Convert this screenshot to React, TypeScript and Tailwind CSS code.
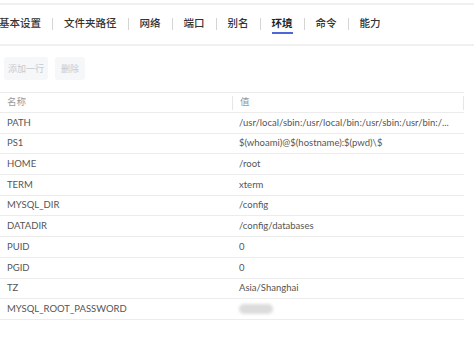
import React from 'react';

const tabs = ['基本设置', '文件夹路径', '网络', '端口', '别名', '环境', '命令', '能力'];

const rows: { name: string; value: string; secret?: boolean }[] = [
  { name: 'PATH', value: '/usr/local/sbin:/usr/local/bin:/usr/sbin:/usr/bin:/...' },
  { name: 'PS1', value: '$(whoami)@$(hostname):$(pwd)\\$' },
  { name: 'HOME', value: '/root' },
  { name: 'TERM', value: 'xterm' },
  { name: 'MYSQL_DIR', value: '/config' },
  { name: 'DATADIR', value: '/config/databases' },
  { name: 'PUID', value: '0' },
  { name: 'PGID', value: '0' },
  { name: 'TZ', value: 'Asia/Shanghai' },
  { name: 'MYSQL_ROOT_PASSWORD', value: '', secret: true },
];

export default function App() {
  const active = '环境';
  return (
    <div
      className="h-[341px] w-[474px] overflow-hidden bg-white pt-[3px]"
      style={{ fontFamily: '"Noto Sans", "Noto Sans CJK SC", sans-serif' }}
    >
      {/* Tabs */}
      <nav className="flex h-[43px] items-start gap-[11px] border-y-2 border-y-[#f0f0f0] pt-[11px]">
        {tabs.map((t, i) => (
          <React.Fragment key={t}>
            {i > 0 && <span className="mt-[2px] h-[12px] w-px bg-[#d4d4d4]" />}
            <div className={`flex flex-col items-center ${i === 0 ? '-ml-[1px]' : ''}`}>
              <span
                className={`text-[10.5px] leading-[14px] ${
                  t === active ? 'font-semibold text-[#222]' : 'font-medium text-[#333]'
                }`}
              >
                {t}
              </span>
              <span
                className={`mt-[2px] h-[2px] w-full ${t === active ? 'bg-[#4f66d8]' : 'bg-transparent'}`}
              />
            </div>
          </React.Fragment>
        ))}
      </nav>

      {/* Toolbar */}
      <div className="mt-[11px] flex gap-[7px] pl-[4px]">
        <button
          type="button"
          className="h-[23px] w-[44px] rounded-[3px] bg-[#f6f7f9] text-[9px] text-[#c6c9ce]"
        >
          添加一行
        </button>
        <button
          type="button"
          className="h-[23px] w-[30px] rounded-[3px] bg-[#f6f7f9] text-[9px] text-[#c6c9ce]"
        >
          删除
        </button>
      </div>

      {/* Table */}
      <div
        className="mt-[12px] w-[464px] text-[9.5px] text-[#555]"
        style={{ fontFamily: 'Lato, "Noto Sans CJK SC", sans-serif' }}
      >
        <div className="flex h-[21px] items-center border-y border-[#ececec] text-[#999]">
          <div className="flex h-full w-[232px] items-center pl-[7px]">名称</div>
          <span className="h-[14px] w-px bg-[#e6e6e6]" />
          <div className="flex h-full flex-1 items-center pl-[7px]">值</div>
          <span className="h-[14px] w-px bg-[#e6e6e6]" />
        </div>
        {rows.map((r) => (
          <div key={r.name} className="flex h-[20.7px] items-center border-b border-[#ececec]">
            <div className="w-[232px] whitespace-nowrap pl-[7px]">{r.name}</div>
            <div className="flex-1 whitespace-nowrap pl-[7px]">
              {r.secret ? (
                <div className="h-[10px] w-[34px] rounded-full bg-[#dcdcdc] blur-[1.5px]" />
              ) : (
                r.value
              )}
            </div>
          </div>
        ))}
      </div>
    </div>
  );
}
